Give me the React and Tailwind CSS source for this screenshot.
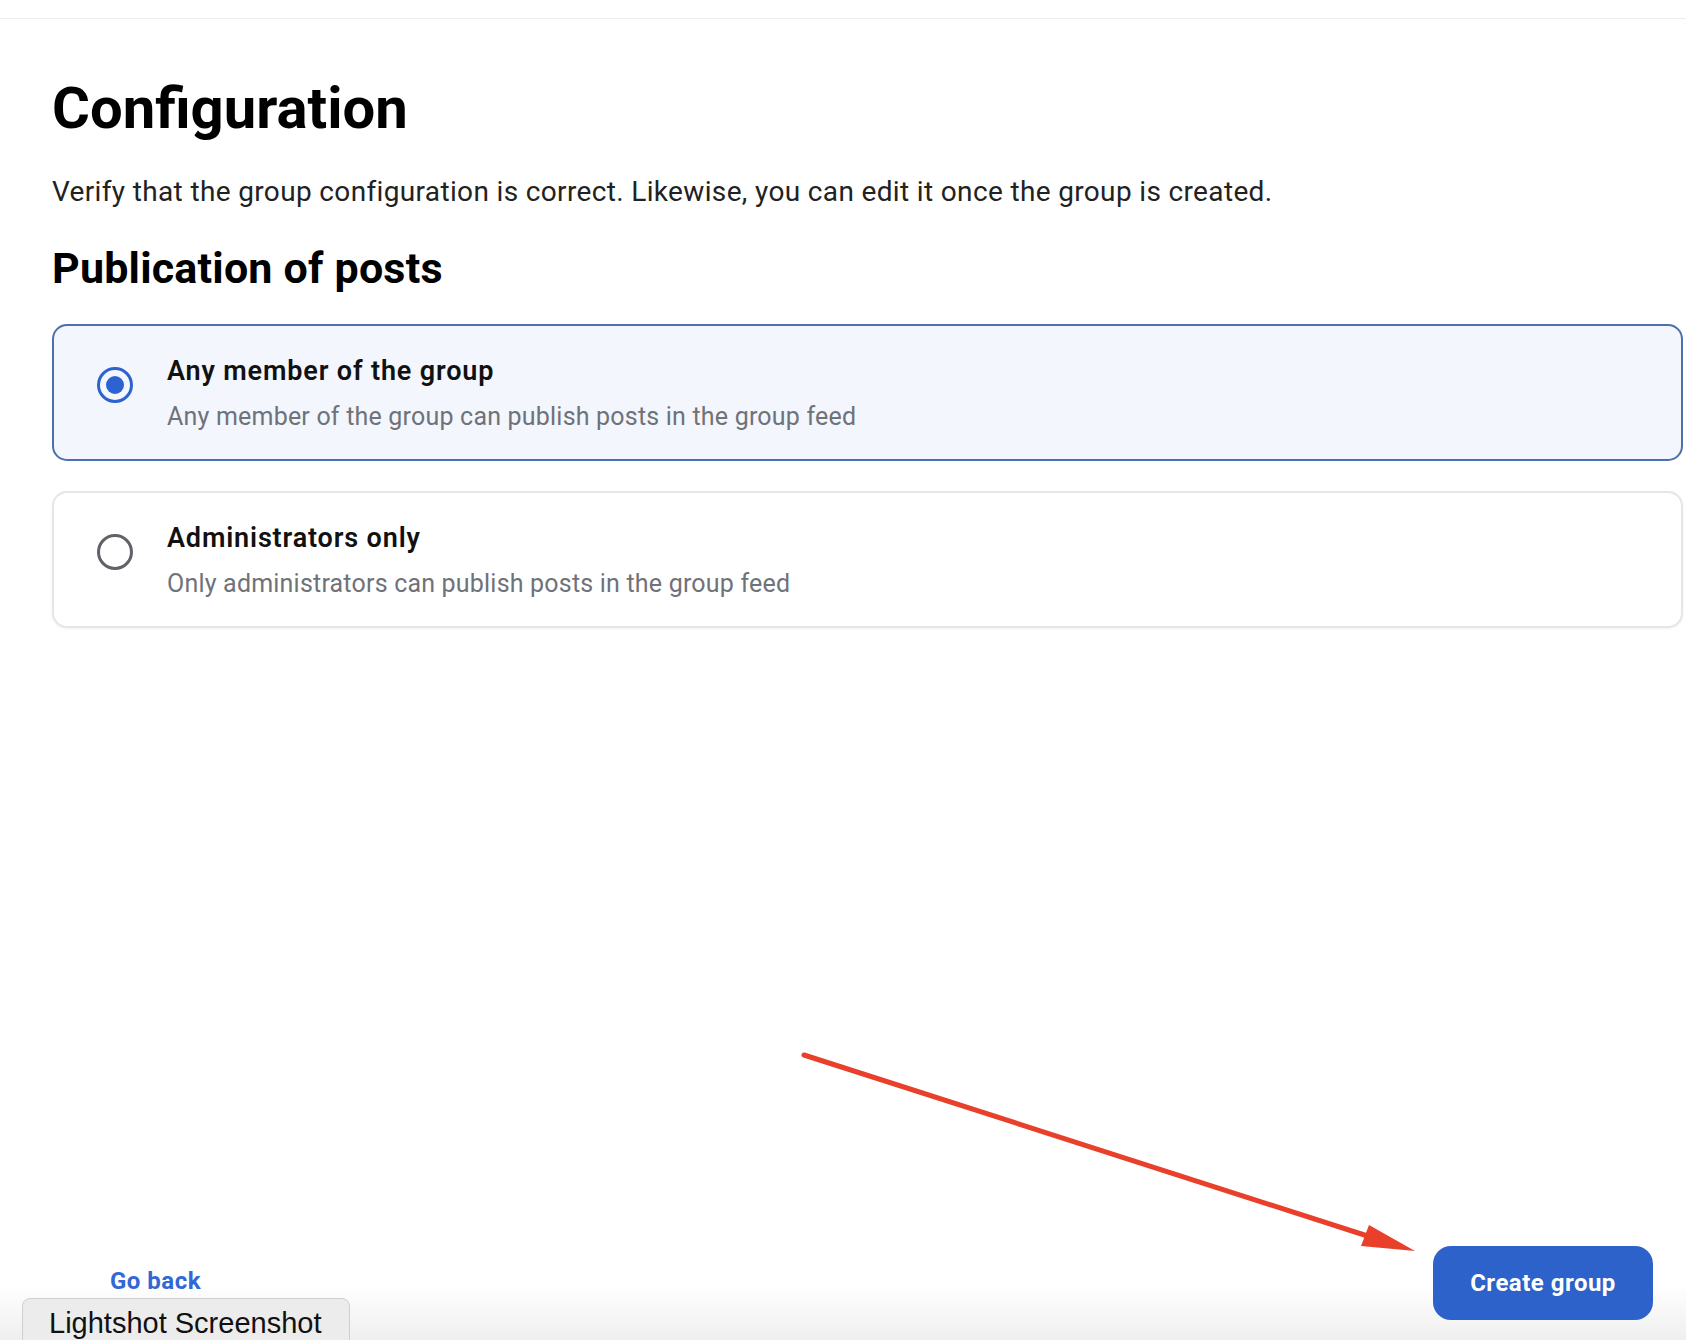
import React, { useState } from 'react';

const options = [
    {
        id: 'any',
        title: 'Any member of the group',
        text: 'Any member of the group can publish posts in the group feed',
    },
    {
        id: 'admins',
        title: 'Administrators only',
        text: 'Only administrators can publish posts in the group feed',
    },
];

function Radio({ checked }) {
    return (
        <span
            className={
                checked
                    ? 'mt-[12px] flex h-[36px] w-[36px] shrink-0 items-center justify-center rounded-full border-[3px] border-[#2c63d1]'
                    : 'mt-[12px] flex h-[36px] w-[36px] shrink-0 items-center justify-center rounded-full border-[3px] border-[#5f6368]'
            }
        >
            {checked && <span className="h-[18px] w-[18px] rounded-full bg-[#2c63d1]" />}
        </span>
    );
}

export default function App() {
    const [selected, setSelected] = useState('any');

    return (
        <div className="relative flex h-[1340px] w-full flex-col overflow-hidden bg-white font-['Roboto',sans-serif] text-black">
            {/* browser bottom fade, sits under the footer */}
            <div className="pointer-events-none absolute bottom-0 left-0 h-[55px] w-full bg-gradient-to-b from-transparent to-[#efefef]" />

            <div className="h-[19px] shrink-0 border-b border-[#eceef1]" />

            <section className="pl-[52px] pr-[3px]">
                <h1 className="mt-[57px] text-[58px] font-bold leading-[64px]">Configuration</h1>
                <p className="mt-[34px] text-[28px] leading-[36px] tracking-[0.35px] text-[#222]">
                    Verify that the group configuration is correct. Likewise, you can edit it once the group is created.
                </p>
                <h2 className="mt-[33px] text-[43px] font-bold leading-[50px] tracking-[0.2px]">Publication of posts</h2>

                <div className="mt-[31px] flex flex-col gap-[30px]">
                    {options.map((o) => {
                        const checked = selected === o.id;
                        return (
                            <button
                                key={o.id}
                                type="button"
                                onClick={() => setSelected(o.id)}
                                className={
                                    checked
                                        ? 'flex h-[137px] w-full items-start gap-[34px] rounded-[15px] border-2 border-[#4a70ae] bg-[#f3f6fd] pl-[43px] pt-[29px] text-left'
                                        : 'flex h-[137px] w-full items-start gap-[34px] rounded-[15px] border-2 border-[#e6e6e6] bg-white pl-[43px] pt-[29px] text-left shadow-[0_1px_3px_rgba(0,0,0,0.06)]'
                                }
                            >
                                <Radio checked={checked} />
                                <div>
                                    <div className="text-[27px] font-semibold leading-[32px] tracking-[0.85px] text-[#111]">{o.title}</div>
                                    <div className="mt-[14px] text-[25px] leading-[32px] tracking-[0.2px] text-[#6f7278]">{o.text}</div>
                                </div>
                            </button>
                        );
                    })}
                </div>
            </section>

            <footer className="relative mt-auto flex items-center justify-between pb-[20px] pl-[110px] pr-[33px]">
                <a href="#" className="-mt-[4px] text-[24px] font-bold leading-[30px] tracking-[0.5px] text-[#3267d6]">Go back</a>
                <button
                    type="button"
                    className="h-[74px] w-[220px] rounded-[18px] bg-[#2c62c9] text-[24px] font-bold tracking-[0.5px] text-white"
                >
                    Create group
                </button>
            </footer>

            {/* screenshot annotation */}
            <svg className="pointer-events-none absolute left-0 top-0" width="1686" height="1340">
                <line x1="804" y1="1055" x2="1380" y2="1240" stroke="#e8402a" strokeWidth="5" strokeLinecap="round" />
                <polygon points="1415,1251 1369,1225 1361,1246" fill="#e8402a" />
            </svg>

            <div className="absolute left-[22px] top-[1298px] h-[60px] w-[328px] rounded-t-[8px] border border-[#cfcfcf] bg-[#ececec] pl-[26px] pt-[7px] font-['Liberation_Sans',sans-serif] text-[29px] leading-[34px] text-[#111]">
                Lightshot Screenshot
            </div>
        </div>
    );
}
